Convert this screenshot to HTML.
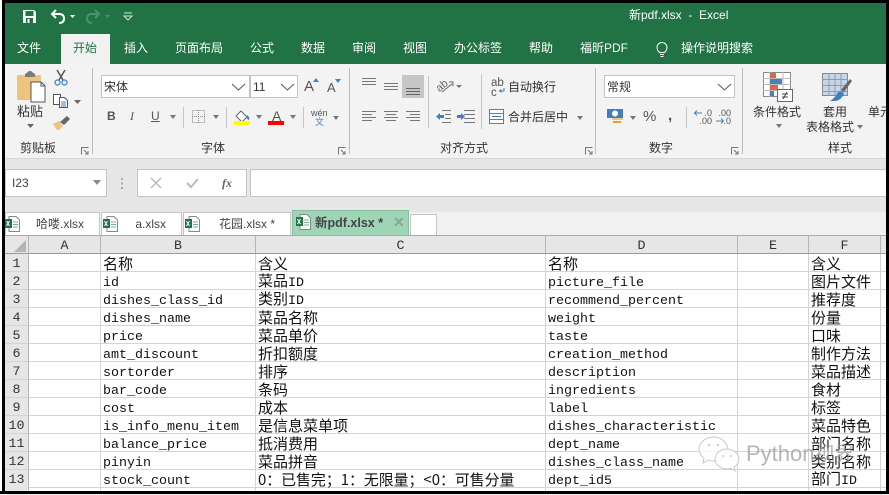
<!DOCTYPE html>
<html><head><meta charset="utf-8">
<style>
html,body{margin:0;padding:0;background:#fff}
#p{position:relative;width:889px;height:495px;overflow:hidden;background:#f1f1f1;font-family:"Liberation Sans","Noto Sans CJK SC",sans-serif;color:#333}
#p div,#p span.a{position:absolute;white-space:nowrap}
.t{font-size:12px;line-height:16px;color:#fff}
.r{font-size:12px;line-height:16px;color:#444}
.sep{width:1px;background:#c6c6c6}
.box{background:#fff;border:1px solid #c4c4c4;box-sizing:border-box}
.tab{background:#fff;border:1px solid #c6c6c6;border-bottom:none;box-sizing:border-box;height:24px;top:212px;font-size:12px;line-height:23px;color:#444}
.hl{height:1px;left:5px;width:881px;background:#d4d4d4}
.vl{width:1px;top:254px;height:238px;background:#d4d4d4}
.c{font-family:"Liberation Mono","WenQuanYi Zen Hei",monospace;font-size:13.33px;line-height:23px;height:18px;color:#111}
.z{font-family:"WenQuanYi Zen Hei","Noto Sans CJK SC",sans-serif;font-size:15px;line-height:20px}
.m{line-height:18px}
.m .z{line-height:18px}
.n{left:5px;width:23px;text-align:center;font-family:"Liberation Mono",monospace;font-size:13.33px;line-height:21px;height:18px;color:#333;background:#e6e6e6}
.h{top:236px;height:17px;line-height:21px;font-family:"Liberation Mono",monospace;font-size:13.33px;text-align:center;color:#333;background:#e6e6e6}
svg{position:absolute;overflow:visible}
</style></head><body><div id="p">

<!-- title bar -->
<div style="left:0;top:0;width:889px;height:64px;background:#217346"></div>
<div class="t" style="left:629px;top:7px">新pdf.xlsx &nbsp;- &nbsp;Excel</div>
<svg style="left:22px;top:9px" width="15" height="15" viewBox="0 0 15 15"><path d="M1 1h11l2 2v11H1z" fill="#fff"/><rect x="3.500" y="2" width="8" height="5" fill="#217346"/><rect x="4" y="9" width="7" height="5" fill="#217346"/><rect x="5.500" y="10" width="2" height="4" fill="#fff"/></svg>
<svg style="left:50px;top:9px" width="30" height="16" viewBox="0 0 30 16"><path d="M6 1 2 5l4 4M2 5h7q5 0 5 4.500T9 14" fill="none" stroke="#fff" stroke-width="2"/><path d="M20 6h5l-2.500 3z" fill="#fff"/></svg>
<svg style="left:85px;top:9px" width="30" height="16" viewBox="0 0 30 16"><path d="M10 1l4 4-4 4M14 5H7Q2 5 2 9.500T7 14" fill="none" stroke="#4f8f6d" stroke-width="2"/><path d="M20 6h5l-2.500 3z" fill="#4f8f6d"/></svg>
<svg style="left:123px;top:12px" width="11" height="10" viewBox="0 0 11 10"><path d="M1 1h8" stroke="#d5e5dc" stroke-width="1"/><path d="M1 4l4 4 4-4z" fill="none" stroke="#d5e5dc"/></svg>

<!-- ribbon tabs -->
<div style="left:61px;top:34px;width:49px;height:30px;background:#f1f1f1"></div>
<div class="t" style="left:17px;top:40px">文件</div>
<div class="t" style="left:73px;top:40px;color:#217346">开始</div>
<div class="t" style="left:124px;top:40px">插入</div>
<div class="t" style="left:175px;top:40px">页面布局</div>
<div class="t" style="left:250px;top:40px">公式</div>
<div class="t" style="left:301px;top:40px">数据</div>
<div class="t" style="left:352px;top:40px">审阅</div>
<div class="t" style="left:403px;top:40px">视图</div>
<div class="t" style="left:454px;top:40px">办公标签</div>
<div class="t" style="left:529px;top:40px">帮助</div>
<div class="t" style="left:580px;top:40px">福昕PDF</div>
<svg style="left:655px;top:41px" width="14" height="17" viewBox="0 0 14 17"><path d="M4.500 11.500C3 10 2 8.500 2 6.500a5 5 0 0 1 10 0c0 2-1 3.500-2.500 5zM5 13.500h4M5.500 15.500h3" fill="none" stroke="#fff"/></svg>
<div class="t" style="left:681px;top:40px">操作说明搜索</div>

<!-- ribbon -->
<div style="left:0;top:64px;width:889px;height:94px;background:#f3f3f3"></div>
<div style="left:0;top:158px;width:889px;height:1px;background:#d6d6d6"></div>
<div class="sep" style="left:92px;top:68px;height:86px;width:1px;background:#bdbdbd"></div>
<div class="sep" style="left:349px;top:68px;height:86px;background:#bdbdbd"></div>
<div class="sep" style="left:595px;top:68px;height:86px;background:#bdbdbd"></div>
<div class="sep" style="left:742px;top:68px;height:86px;background:#bdbdbd"></div>
<div class="sep" style="left:183px;top:107px;height:21px"></div>
<div class="sep" style="left:226px;top:107px;height:21px"></div>
<div class="sep" style="left:303px;top:107px;height:21px"></div>
<div class="sep" style="left:428px;top:76px;height:52px"></div>
<div class="sep" style="left:481px;top:74px;height:55px"></div>
<div class="sep" style="left:686px;top:107px;height:21px"></div>

<!-- clipboard -->
<svg style="left:17px;top:71px" width="30" height="32" viewBox="0 0 30 32"><rect y="4" width="24" height="25" rx="1" fill="#ecc47e"/><path d="M8 4q0-2 2-2h0q1-2 3-2t3 2q2 0 2 2v2H8z" fill="#7a7a7a"/><path d="M14 11h10l4 4v16H14z" fill="#fff" stroke="#555"/><path d="M24 11v4h4" fill="none" stroke="#555"/></svg>
<div class="r" style="left:17px;top:104px;font-size:13px;color:#333">粘贴</div>
<svg style="left:27px;top:124px" width="7" height="4"><path d="M0 0h7L3.500 4z" fill="#666"/></svg>
<svg style="left:54px;top:70px" width="14" height="16" viewBox="0 0 14 16"><path d="M3 0l6 10M11 0 5 10" stroke="#555" stroke-width="1.500"/><circle cx="3.500" cy="12.500" r="2.500" fill="none" stroke="#3f7fbf" stroke-width="1.200"/><circle cx="10.500" cy="12.500" r="2.500" fill="none" stroke="#3f7fbf" stroke-width="1.200"/></svg>
<svg style="left:53px;top:94px" width="16" height="14" viewBox="0 0 16 14"><path d="M.5.500h7v10h-7z" fill="#fff" stroke="#555"/><path d="M6.500 3.500h5l3 3v7h-8z" fill="#fff" stroke="#555"/><path d="M8 8h5M8 10h5M8 12h5" stroke="#3f7fbf"/></svg>
<svg style="left:74px;top:100px" width="7" height="4"><path d="M0 0h7L3.500 4z" fill="#666"/></svg>
<svg style="left:53px;top:116px" width="17" height="15" viewBox="0 0 17 15"><path d="M0 8l6-3 4 5-4 4H4z" fill="#ecc47e"/><path d="M7 6l7-6 3 3-6 6z" fill="#666"/></svg>
<div class="r" style="left:20px;top:140px;color:#333">剪贴板</div>
<svg style="left:81px;top:147px" width="8" height="8"><path d="M.5 7.500v-7h7M3 3l4 4M7 4v3H4" fill="none" stroke="#777"/></svg>

<!-- font -->
<div class="box" style="left:101px;top:75px;width:149px;height:23px"></div>
<div class="r" style="left:104px;top:79px;color:#333">宋体</div>
<svg style="left:232px;top:84px" width="13" height="7"><path d="M0 0l6.500 6L13 0" fill="none" stroke="#555"/></svg>
<div class="box" style="left:250px;top:75px;width:48px;height:23px"></div>
<div class="r" style="left:253px;top:79px;color:#333">11</div>
<svg style="left:281px;top:84px" width="13" height="7"><path d="M0 0l6.500 6L13 0" fill="none" stroke="#555"/></svg>
<div class="r" style="left:304px;top:79px;font-size:15px;color:#555">A</div>
<svg style="left:313px;top:78px" width="6" height="4"><path d="M3 0l3 4H0z" fill="#4a80b8"/></svg>
<div class="r" style="left:327px;top:80px;font-size:13px;color:#555">A</div>
<svg style="left:335px;top:79px" width="6" height="4"><path d="M0 0h6L3 4z" fill="#4a80b8"/></svg>
<div class="r" style="left:107px;top:108px;font-weight:bold;color:#555">B</div>
<div class="r" style="left:130px;top:108px;font-style:italic;color:#555;font-family:'Liberation Serif'">I</div>
<div class="r" style="left:151px;top:108px;text-decoration:underline;color:#555">U</div>
<svg style="left:170px;top:115px" width="6" height="4"><path d="M0 0h6L3 4z" fill="#777"/></svg>
<svg style="left:192px;top:110px" width="13" height="13"><path d="M.5.500h12v12H.5zM6.500 0v13M0 6.500h13" fill="none" stroke="#888" stroke-dasharray="1 1"/></svg>
<svg style="left:213px;top:115px" width="6" height="4"><path d="M0 0h6L3 4z" fill="#777"/></svg>
<svg style="left:234px;top:110px" width="16" height="16" viewBox="0 0 16 16"><path d="M7 1l6 6-5 5-6-6z" fill="#fff" stroke="#666"/><path d="M13 5q3 2 2 5-3-1-2-5" fill="#3f7fbf"/><rect y="11" width="16" height="4" fill="#ff0"/></svg>
<svg style="left:256px;top:115px" width="6" height="4"><path d="M0 0h6L3 4z" fill="#777"/></svg>
<div class="r" style="left:272px;top:108px;font-size:14px;color:#555">A</div>
<div style="left:268px;top:121px;width:16px;height:4px;background:#f00"></div>
<svg style="left:290px;top:115px" width="6" height="4"><path d="M0 0h6L3 4z" fill="#777"/></svg>
<div class="r" style="left:311px;top:108px;font-size:9px;line-height:10px;color:#555">wén</div>
<div class="r" style="left:315px;top:117px;font-size:9px;line-height:10px;color:#3f7fbf">文</div>
<svg style="left:333px;top:116px" width="6" height="4"><path d="M0 0h6L3 4z" fill="#777"/></svg>
<div class="r" style="left:201px;top:140px;color:#333">字体</div>
<svg style="left:338px;top:147px" width="8" height="8"><path d="M.5 7.500v-7h7M3 3l4 4M7 4v3H4" fill="none" stroke="#777"/></svg>

<!-- alignment -->
<div style="left:402px;top:75px;width:22px;height:23px;background:#c6c6c6"></div>
<svg style="left:362px;top:78px" width="62" height="17" stroke="#777"><path d="M0 .500h14M0 3.500h14M0 6.500h14"/><path d="M22 5.500h14M22 8.500h14M22 11.500h14"/><path d="M44 10.500h14M44 13.500h14M44 16.500h14" stroke="#666"/></svg>
<svg style="left:362px;top:111px" width="58" height="11" stroke="#777"><path d="M0 .500h14M0 3.500h10M0 6.500h14M0 9.500h10"/><path d="M22 .500h14M24 3.500h10M22 6.500h14M24 9.500h10"/><path d="M44 .500h14M48 3.500h10M44 6.500h14M48 9.500h10"/></svg>
<div class="r" style="left:436px;top:78px;font-size:11px;color:#666;transform:rotate(-40deg)">ab</div>
<svg style="left:436px;top:78px" width="26" height="16" viewBox="0 0 26 16"><path d="M6 14 16 6M13 4h4v4" stroke="#666" fill="none"/><path d="M20 7h6l-3 3z" fill="#777"/></svg>
<svg style="left:436px;top:110px" width="39" height="13"><g stroke="#777"><path d="M6 .500h9M9 4.500h6M9 8.500h6M6 12.500h9M28 .500h11M28 4.500h11M28 8.500h11M28 12.500h11"/></g><path d="M0 6.500 4 3v2h4v3H4v2z" fill="#3f7fbf"/><path d="M29 6.500 25 3v2h-4v3h4v2z" fill="#3f7fbf"/></svg>
<div class="r" style="left:491px;top:78px;font-size:11.500px;line-height:10px;color:#555">ab<br>c</div>
<svg style="left:498px;top:88px" width="7" height="6"><path d="M6 0v3H2M3.500 1.500 1.500 3l2 1.500" fill="none" stroke="#3f7fbf"/></svg>
<div class="r" style="left:508px;top:79px;color:#333">自动换行</div>
<svg style="left:489px;top:109px" width="15" height="15" viewBox="0 0 15 15"><rect x=".5" y=".5" width="14" height="14" fill="#fff" stroke="#777"/><path d="M0 4.500h15M0 10.500h15" stroke="#777"/><path d="M3 7.500h9" stroke="#3f7fbf"/></svg>
<div class="r" style="left:508px;top:109px;color:#333">合并后居中</div>
<svg style="left:577px;top:116px" width="6" height="4"><path d="M0 0h6L3 4z" fill="#777"/></svg>
<div class="r" style="left:440px;top:140px;color:#333">对齐方式</div>
<svg style="left:585px;top:147px" width="8" height="8"><path d="M.5 7.500v-7h7M3 3l4 4M7 4v3H4" fill="none" stroke="#777"/></svg>

<!-- number -->
<div class="box" style="left:604px;top:75px;width:131px;height:23px"></div>
<div class="r" style="left:607px;top:79px;color:#333">常规</div>
<svg style="left:718px;top:84px" width="13" height="7"><path d="M0 0l6.500 6L13 0" fill="none" stroke="#555"/></svg>
<svg style="left:607px;top:109px" width="17" height="16" viewBox="0 0 17 16"><rect width="16" height="9" fill="#3f7fbf"/><circle cx="8" cy="4.500" r="3" fill="#fff"/><rect x="5" y="9" width="11" height="2" fill="#ecc47e"/><rect x="6" y="12" width="8" height="2" fill="#e0a040"/></svg>
<svg style="left:630px;top:116px" width="6" height="4"><path d="M0 0h6L3 4z" fill="#777"/></svg>
<div class="r" style="left:643px;top:109px;font-size:15px;color:#555">%</div>
<div class="r" style="left:668px;top:108px;font-size:15px;font-weight:bold;color:#555">,</div>
<div class="r" style="left:697px;top:109px;font-size:9px;line-height:8px;color:#555">&nbsp;&nbsp;&nbsp;.0<br>&nbsp;.00</div>
<svg style="left:694px;top:110px" width="8" height="6"><path d="M8 3H1M3 .5 .5 3 3 5.500" fill="none" stroke="#3f7fbf"/></svg>
<div class="r" style="left:716px;top:109px;font-size:9px;line-height:8px;color:#555">&nbsp;.00<br>&nbsp;&nbsp;&nbsp;.0</div>
<svg style="left:716px;top:118px" width="8" height="6"><path d="M0 3h7M5 .5 7.500 3 5 5.500" fill="none" stroke="#3f7fbf"/></svg>
<div class="r" style="left:649px;top:140px;color:#333">数字</div>
<svg style="left:731px;top:147px" width="8" height="8"><path d="M.5 7.500v-7h7M3 3l4 4M7 4v3H4" fill="none" stroke="#777"/></svg>

<!-- styles -->
<svg style="left:763px;top:72px" width="31" height="30" viewBox="0 0 31 30"><rect x=".5" y=".5" width="27" height="24" fill="#fff" stroke="#888"/><path d="M7 0v25M20 0v25M0 6.500h28M0 12.500h28M0 18.500h28" stroke="#bbb"/><rect x="7" y="1" width="6" height="5" fill="#d9694a"/><rect x="7" y="7" width="12" height="5" fill="#4a80b8"/><rect x="7" y="13" width="8" height="5" fill="#d9694a"/><rect x="7" y="19" width="4" height="5" fill="#4a80b8"/><rect x="14.500" y="17.500" width="15" height="12" fill="#fff" stroke="#666"/><path d="M19 22h6M19 25h6M24 20l-4 7" stroke="#444"/></svg>
<div class="r" style="left:753px;top:104px;color:#333">条件格式</div>
<svg style="left:776px;top:124px" width="6" height="4"><path d="M0 0h6L3 4z" fill="#777"/></svg>
<svg style="left:822px;top:73px" width="30" height="30" viewBox="0 0 30 30"><rect x=".5" y=".5" width="25" height="22" fill="#c4d6ea" stroke="#888"/><path d="M7 0v23M13 0v23M19 0v23M0 6.500h26M0 12.500h26M0 18.500h26" stroke="#999"/><path d="M19 17 28 6l2 2-8 11z" fill="#666"/><path d="M16 19q5-1 6 2-3 6-8 7h-6q5-3 8-9" fill="#3f7fbf"/></svg>
<div class="r" style="left:823px;top:104px;color:#333">套用</div>
<div class="r" style="left:806px;top:119px;color:#333">表格格式</div>
<svg style="left:857px;top:125px" width="6" height="4"><path d="M0 0h6L3 4z" fill="#777"/></svg>
<div class="r" style="left:868px;top:104px;color:#333">单元</div>
<div class="r" style="left:828px;top:140px;color:#333">样式</div>

<!-- formula bar -->
<div style="left:0;top:159px;width:889px;height:53px;background:#e7e7e7"></div>
<div class="box" style="left:5px;top:169px;width:102px;height:28px"></div>
<div class="r" style="left:12px;top:175px;color:#444">I23</div>
<svg style="left:93px;top:180px" width="8" height="5"><path d="M0 0h8L4 5z" fill="#888"/></svg>
<svg style="left:121px;top:178px" width="2" height="11"><path d="M1 0v2M1 4.500v2M1 9v2" stroke="#aaa" stroke-width="2"/></svg>
<div class="box" style="left:137px;top:169px;width:110px;height:28px"></div>
<svg style="left:151px;top:178px" width="10" height="10"><path d="M0 0l10 10M10 0 0 10" stroke="#bbb" stroke-width="1.500"/></svg>
<svg style="left:186px;top:178px" width="13" height="10"><path d="M1 5l4 4 7-8" fill="none" stroke="#bbb" stroke-width="2"/></svg>
<div style="left:222px;top:175px;font:italic bold 12px/16px 'Liberation Serif',serif;color:#666">fx</div>
<div class="box" style="left:250px;top:169px;width:639px;height:28px"></div>

<!-- workbook tabs -->
<div class="tab" style="left:5px;width:95px;text-align:right;padding-right:15px">哈喽.xlsx</div>
<div class="tab" style="left:101px;width:81px;text-align:right;padding-right:15px">a.xlsx</div>
<div class="tab" style="left:183px;width:108px;text-align:right;padding-right:15px">花园.xlsx *</div>
<div class="tab" style="left:292px;top:210px;height:26px;width:117px;background:#9fd5b7;border-color:#88bda0;font-weight:bold;line-height:24px;padding-left:22px;color:#444;font-size:12.500px">新pdf.xlsx *</div>
<div class="r" style="left:393px;top:214px;font-weight:bold;color:#8aa797;font-size:14px">✕</div>
<div class="tab" style="left:410px;top:214px;height:22px;width:27px"></div>
<svg style="left:5px;top:216px" width="15" height="16" viewBox="0 0 15 16"><path d="M4 .500h7l3.500 3.500v11.500H4z" fill="#fff" stroke="#888"/><path d="M8 6h5M8 8.500h5M8 11h5" stroke="#7a9"/><rect y="3" width="7" height="9" fill="#217346"/><path d="M1.500 5l3 5M4.500 5l-3 5" stroke="#fff"/></svg>
<svg style="left:103px;top:216px" width="15" height="16" viewBox="0 0 15 16"><path d="M4 .500h7l3.500 3.500v11.500H4z" fill="#fff" stroke="#888"/><path d="M8 6h5M8 8.500h5M8 11h5" stroke="#7a9"/><rect y="3" width="7" height="9" fill="#217346"/><path d="M1.500 5l3 5M4.500 5l-3 5" stroke="#fff"/></svg>
<svg style="left:185px;top:216px" width="15" height="16" viewBox="0 0 15 16"><path d="M4 .500h7l3.500 3.500v11.500H4z" fill="#fff" stroke="#888"/><path d="M8 6h5M8 8.500h5M8 11h5" stroke="#7a9"/><rect y="3" width="7" height="9" fill="#217346"/><path d="M1.500 5l3 5M4.500 5l-3 5" stroke="#fff"/></svg>
<svg style="left:296px;top:214px" width="15" height="16" viewBox="0 0 15 16"><path d="M4 .500h7l3.500 3.500v11.500H4z" fill="#fff" stroke="#888"/><path d="M8 6h5M8 8.500h5M8 11h5" stroke="#7a9"/><rect y="3" width="7" height="9" fill="#217346"/><path d="M1.500 5l3 5M4.500 5l-3 5" stroke="#fff"/></svg>

<!-- grid -->
<div style="left:5px;top:236px;width:881px;height:256px;background:#fff"></div>
<div style="left:5px;top:235px;width:881px;height:1px;background:#aaa"></div>
<div style="left:5px;top:236px;width:881px;height:17px;background:#e6e6e6"></div>
<div style="left:5px;top:253px;width:881px;height:1px;background:#9a9a9a"></div>
<div style="left:5px;top:254px;width:23px;height:238px;background:#e6e6e6"></div>
<svg style="left:14px;top:240px" width="12" height="12"><path d="M12 0v12H0z" fill="#b5b5b5"/></svg>
<div class="hl" style="top:271px"></div><div class="hl" style="top:289px"></div><div class="hl" style="top:307px"></div><div class="hl" style="top:325px"></div><div class="hl" style="top:343px"></div><div class="hl" style="top:361px"></div><div class="hl" style="top:379px"></div><div class="hl" style="top:397px"></div><div class="hl" style="top:415px"></div><div class="hl" style="top:433px"></div><div class="hl" style="top:451px"></div><div class="hl" style="top:469px"></div><div class="hl" style="top:487px"></div>
<div class="vl" style="left:28px;top:236px;height:256px;background:#b5b5b5"></div>
<div class="vl" style="left:100px"></div><div class="vl" style="left:255px"></div><div class="vl" style="left:545px"></div><div class="vl" style="left:737px"></div><div class="vl" style="left:808px"></div><div class="vl" style="left:880px"></div>

<div class="h" style="left:29px;width:71px">A</div><div class="h" style="left:101px;width:154px">B</div><div class="h" style="left:256px;width:289px">C</div><div class="h" style="left:546px;width:191px">D</div><div class="h" style="left:738px;width:70px">E</div><div class="h" style="left:809px;width:71px">F</div>
<div class="vl" style="left:100px;top:236px;height:17px;background:#b5b5b5"></div><div class="vl" style="left:255px;top:236px;height:17px;background:#b5b5b5"></div><div class="vl" style="left:545px;top:236px;height:17px;background:#b5b5b5"></div><div class="vl" style="left:737px;top:236px;height:17px;background:#b5b5b5"></div><div class="vl" style="left:808px;top:236px;height:17px;background:#b5b5b5"></div><div class="vl" style="left:880px;top:236px;height:17px;background:#b5b5b5"></div>

<div class="n" style="top:254px">1</div><div class="n" style="top:272px">2</div><div class="n" style="top:290px">3</div><div class="n" style="top:308px">4</div><div class="n" style="top:326px">5</div><div class="n" style="top:344px">6</div><div class="n" style="top:362px">7</div><div class="n" style="top:380px">8</div><div class="n" style="top:398px">9</div><div class="n" style="top:416px">10</div><div class="n" style="top:434px">11</div><div class="n" style="top:452px">12</div><div class="n" style="top:470px">13</div>
<div style="left:5px;top:271px;width:23px;height:1px;background:#d4d4d4"></div><div style="left:5px;top:289px;width:23px;height:1px;background:#d4d4d4"></div><div style="left:5px;top:307px;width:23px;height:1px;background:#d4d4d4"></div><div style="left:5px;top:325px;width:23px;height:1px;background:#d4d4d4"></div><div style="left:5px;top:343px;width:23px;height:1px;background:#d4d4d4"></div><div style="left:5px;top:361px;width:23px;height:1px;background:#d4d4d4"></div><div style="left:5px;top:379px;width:23px;height:1px;background:#d4d4d4"></div><div style="left:5px;top:397px;width:23px;height:1px;background:#d4d4d4"></div><div style="left:5px;top:415px;width:23px;height:1px;background:#d4d4d4"></div><div style="left:5px;top:433px;width:23px;height:1px;background:#d4d4d4"></div><div style="left:5px;top:451px;width:23px;height:1px;background:#d4d4d4"></div><div style="left:5px;top:469px;width:23px;height:1px;background:#d4d4d4"></div>

<div class="c z" style="left:103px;top:254px">名称</div><div class="c z" style="left:258px;top:254px">含义</div><div class="c z" style="left:548px;top:254px">名称</div><div class="c z" style="left:811px;top:254px">含义</div>
<div class="c" style="left:103px;top:272px">id</div><div class="c m" style="left:258px;top:272px"><span class="z">菜品</span>ID</div><div class="c" style="left:548px;top:272px">picture_file</div><div class="c z" style="left:811px;top:272px">图片文件</div>
<div class="c" style="left:103px;top:290px">dishes_class_id</div><div class="c m" style="left:258px;top:290px"><span class="z">类别</span>ID</div><div class="c" style="left:548px;top:290px">recommend_percent</div><div class="c z" style="left:811px;top:290px">推荐度</div>
<div class="c" style="left:103px;top:308px">dishes_name</div><div class="c z" style="left:258px;top:308px">菜品名称</div><div class="c" style="left:548px;top:308px">weight</div><div class="c z" style="left:811px;top:308px">份量</div>
<div class="c" style="left:103px;top:326px">price</div><div class="c z" style="left:258px;top:326px">菜品单价</div><div class="c" style="left:548px;top:326px">taste</div><div class="c z" style="left:811px;top:326px">口味</div>
<div class="c" style="left:103px;top:344px">amt_discount</div><div class="c z" style="left:258px;top:344px">折扣额度</div><div class="c" style="left:548px;top:344px">creation_method</div><div class="c z" style="left:811px;top:344px">制作方法</div>
<div class="c" style="left:103px;top:362px">sortorder</div><div class="c z" style="left:258px;top:362px">排序</div><div class="c" style="left:548px;top:362px">description</div><div class="c z" style="left:811px;top:362px">菜品描述</div>
<div class="c" style="left:103px;top:380px">bar_code</div><div class="c z" style="left:258px;top:380px">条码</div><div class="c" style="left:548px;top:380px">ingredients</div><div class="c z" style="left:811px;top:380px">食材</div>
<div class="c" style="left:103px;top:398px">cost</div><div class="c z" style="left:258px;top:398px">成本</div><div class="c" style="left:548px;top:398px">label</div><div class="c z" style="left:811px;top:398px">标签</div>
<div class="c" style="left:103px;top:416px">is_info_menu_item</div><div class="c z" style="left:258px;top:416px">是信息菜单项</div><div class="c" style="left:548px;top:416px">dishes_characteristic</div><div class="c z" style="left:811px;top:416px">菜品特色</div>
<div class="c" style="left:103px;top:434px">balance_price</div><div class="c z" style="left:258px;top:434px">抵消费用</div><div class="c" style="left:548px;top:434px">dept_name</div><div class="c z" style="left:811px;top:434px">部门名称</div>
<div class="c" style="left:103px;top:452px">pinyin</div><div class="c z" style="left:258px;top:452px">菜品拼音</div><div class="c" style="left:548px;top:452px">dishes_class_name</div><div class="c z" style="left:811px;top:452px">类别名称</div>
<div class="c" style="left:103px;top:470px">stock_count</div><div class="c z" style="left:258px;top:470px;font-size:14.900px">0：已售完；1：无限量；&lt;0：可售分量</div><div class="c" style="left:548px;top:470px">dept_id5</div><div class="c m" style="left:811px;top:470px"><span class="z">部门</span>ID</div>

<!-- watermark -->
<svg style="left:698px;top:436px" width="42" height="36" viewBox="0 0 42 36"><path d="M16 1C7 1 1 7 1 13c0 4 2 7 5 9l-1 5 5-3c2 .700 4 1 6 1 8 0 14-5 14-11S24 1 16 1z" fill="#fff" fill-opacity=".75" stroke="#c8c8c8"/><path d="M29 13c-7 0-12 5-12 10s5 10 12 10c1.500 0 3-.200 4-.600l4 2.600-1-4c3-2 5-5 5-8 0-5-5-10-12-10z" fill="#fff" fill-opacity=".85" stroke="#c8c8c8"/><circle cx="11" cy="9" r="1.200" fill="#ccc"/><circle cx="20" cy="9" r="1.200" fill="#ccc"/><circle cx="25" cy="20" r="1" fill="#ccc"/><circle cx="33" cy="20" r="1" fill="#ccc"/></svg>
<div style="left:746px;top:441px;font-size:22px;line-height:26px;color:rgba(150,150,150,.7)">Python<span style="font-size:20px">视界</span></div>

<!-- frame -->
<div style="left:0;top:0;width:889px;height:3px;background:#000"></div>
<div style="left:2px;top:0;width:3px;height:495px;background:#000"></div>
<div style="left:0;top:0;width:2px;height:495px;background:#fff"></div>
<div style="left:886px;top:0;width:3px;height:495px;background:#000"></div>
<div style="left:0;top:491px;width:889px;height:3px;background:#000"></div>
<div style="left:0;top:494px;width:889px;height:1px;background:#eee"></div>
</div></body></html>
